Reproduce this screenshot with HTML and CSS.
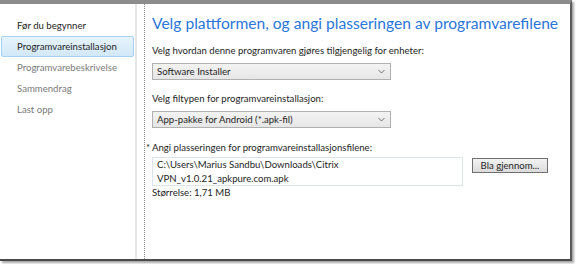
FILE: index.html
```html
<!DOCTYPE html>
<html>
<head>
<meta charset="utf-8">
<link rel="stylesheet" href="styles.css">
</head>
<body>
<div class="frame">
  <nav class="sidebar">
    <div class="nav-item">Før du begynner</div>
    <div class="nav-item selected">Programvareinstallasjon</div>
    <div class="nav-item muted">Programvarebeskrivelse</div>
    <div class="nav-item muted">Sammendrag</div>
    <div class="nav-item muted">Last opp</div>
  </nav>
  <div class="divider"></div>
  <main class="content">
    <h1 class="title">Velg plattformen, og angi plasseringen av programvarefilene</h1>
    <div class="label">Velg hvordan denne programvaren gjøres tilgjengelig for enheter:</div>
    <div class="select"><span>Software Installer</span><svg class="chev" width="7" height="5" viewBox="0 0 7 5"><path d="M0.5 1 L3.5 4 L6.5 1" fill="none" stroke="#707070" stroke-width="1"/></svg></div>
    <div class="label second">Velg filtypen for programvareinstallasjon:</div>
    <div class="select"><span>App-pakke for Android (*.apk-fil)</span><svg class="chev" width="7" height="5" viewBox="0 0 7 5"><path d="M0.5 1 L3.5 4 L6.5 1" fill="none" stroke="#707070" stroke-width="1"/></svg></div>
    <div class="label third"><span class="req">*</span>Angi plasseringen for programvareinstallasjonsfilene:</div>
    <div class="file-row">
      <div class="path">C:\Users\Marius Sandbu\Downloads\Citrix<br>VPN_v1.0.21_apkpure.com.apk</div>
      <button class="browse">Bla gjennom...</button>
    </div>
    <div class="size">Størrelse: 1,71 MB</div>
  </main>
</div>
</body>
</html>
```
FILE: styles.css
```css
html, body {
  margin: 0;
  padding: 0;
  background: #ffffff;
  width: 577px;
  height: 264px;
  overflow: hidden;
}
body {
  font-family: "Lato", "Noto Sans", sans-serif;
  font-size: 9.6px;
  color: #1e1e1e;
}
.frame {
  box-sizing: border-box;
  width: 572px;
  height: 261px;
  border-top: 4px solid #8c8c8c;
  border-right: 2px solid #5a5a5a;
  border-bottom: 2px solid #4a4a4a;
  box-shadow: 2px 2px 2px rgba(0,0,0,0.35);
  display: flex;
  background: #fff;
}
.sidebar {
  width: 135px;
  flex: none;
  border-right: 2px solid #e6e6e6;
  padding-top: 11px;
  box-sizing: content-box;
}
.nav-item {
  height: 21px;
  line-height: 21px;
  padding-left: 16px;
  margin: 0 1px;
  color: #1e1e1e;
  white-space: nowrap;
}
.nav-item.selected {
  height: 19px;
  line-height: 19px;
  padding-left: 15px;
  border: 1px solid #a6d2f2;
  border-radius: 2px;
  background: linear-gradient(#e6f3fc, #d2e8f8);
}
.nav-item.muted {
  color: #7a7a7a;
}
.divider {
  width: 7px;
  flex: none;
  border-right: 1px dotted #8a8a8a;
}
.content {
  flex: 1;
  padding-left: 7px;
  padding-top: 8px;
}
.title {
  margin: 0;
  font-weight: normal;
  font-size: 15.6px;
  line-height: 22px;
  color: #2a76d9;
  white-space: nowrap;
}
.label {
  margin-top: 10px;
  line-height: 14px;
  white-space: nowrap;
}
.label.second { margin-top: 12px; }
.label.third { margin-top: 13px; margin-left: -6px; }
.req { display: inline-block; width: 6px; }
.select {
  margin-top: 5px;
  box-sizing: border-box;
  width: 239px;
  height: 17px;
  border: 1px solid #b0b0b0;
  background: linear-gradient(#f3f3f3, #e6e6e6);
  display: flex;
  align-items: center;
  justify-content: space-between;
  padding: 0 5px 0 4px;
}
.chev { flex: none; }
.file-row {
  margin-top: 2px;
  display: flex;
  align-items: flex-start;
  gap: 9px;
}
.path {
  box-sizing: border-box;
  width: 311px;
  height: 29px;
  border: 1px solid #dce3ea;
  padding: 0 4px;
  line-height: 14px;
  white-space: nowrap;
}
.browse {
  margin: 1px 0 0;
  box-sizing: border-box;
  width: 76px;
  height: 15px;
  padding: 0;
  border: 1px solid #707070;
  border-radius: 0;
  background: linear-gradient(#f2f2f2, #dcdcdc);
  font-family: inherit;
  font-size: 9.6px;
  line-height: 13px;
  color: #1e1e1e;
  white-space: nowrap;
}
.size {
  margin-top: 0;
  line-height: 14px;
}
```
